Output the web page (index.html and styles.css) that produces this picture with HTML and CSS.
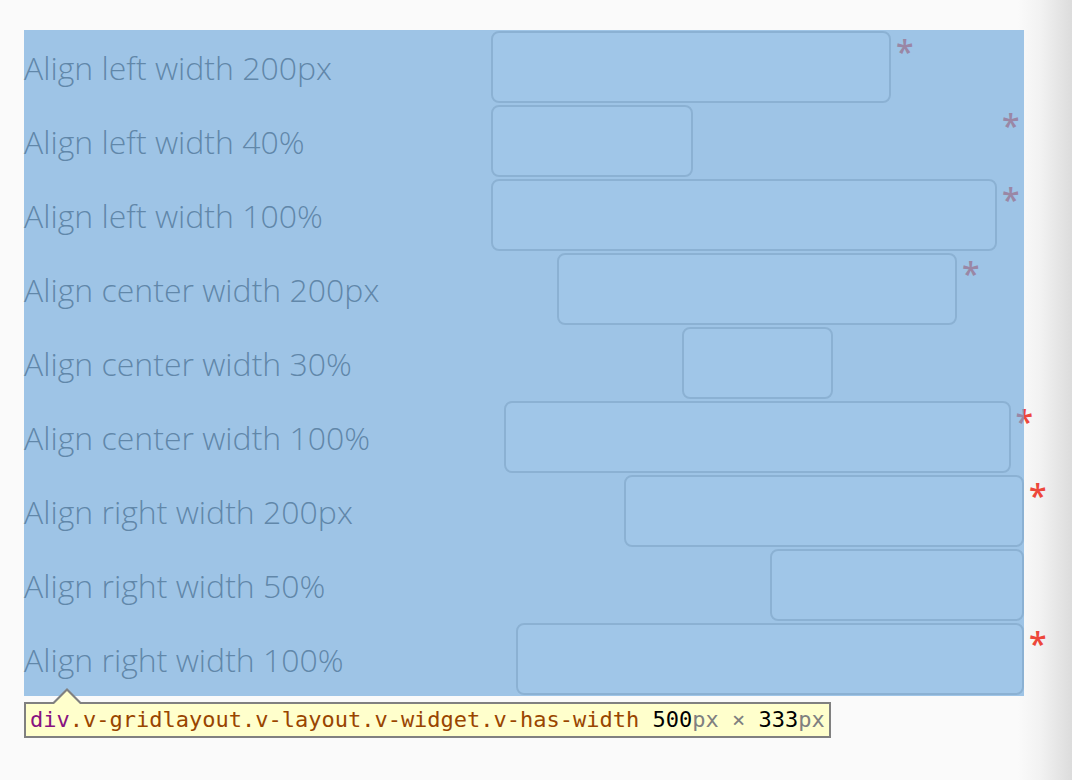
FILE: index.html
```html
<!DOCTYPE html>
<html lang="en">
<head>
  <meta charset="UTF-8">
  <title>GridLayout alignment</title>
  <link rel="stylesheet" href="styles.css">
</head>
<body>
  <div class="page">
    <!-- Grid of captions and text fields -->
    <div class="form">
      <div class="caption">Align left width 200px</div>
      <div class="slot">
        <div class="field w-200"></div><span class="req">*</span>
      </div>

      <div class="caption">Align left width 40%</div>
      <div class="slot">
        <div class="field w-40"></div><span class="req req-end">*</span>
      </div>

      <div class="caption">Align left width 100%</div>
      <div class="slot">
        <div class="field w-100-left"></div><span class="req">*</span>
      </div>

      <div class="caption">Align center width 200px</div>
      <div class="slot center">
        <div class="field w-200"></div><span class="req">*</span>
      </div>

      <div class="caption">Align center width 30%</div>
      <div class="slot center">
        <div class="field w-30"></div>
      </div>

      <div class="caption">Align center width 100%</div>
      <div class="slot center">
        <div class="field w-100-center"></div><span class="req">*</span>
      </div>

      <div class="caption">Align right width 200px</div>
      <div class="slot right">
        <div class="field w-200"></div><span class="req">*</span>
      </div>

      <div class="caption">Align right width 50%</div>
      <div class="slot right">
        <div class="field w-50"></div>
      </div>

      <div class="caption">Align right width 100%</div>
      <div class="slot right">
        <div class="field w-100-right"></div><span class="req">*</span>
      </div>

      <!-- inspector highlight -->
      <div class="highlight"></div>
    </div>

    <div class="inspect-tip">
      <span class="tag">div</span><span class="cls">.v-gridlayout.v-layout.v-widget.v-has-width</span>
      <span class="num">500</span><span class="unit">px</span> <span class="unit">&times;</span> <span class="num">333</span><span class="unit">px</span>
    </div>
  </div>
</body>
</html>
```

FILE: styles.css
```css
* {
  margin: 0;
  padding: 0;
  box-sizing: border-box;
}

body {
  height: 780px;
  background: linear-gradient(90deg, #fafafa 1018px, #f2f2f2 1040px, #dcdcdc 1072px);
  font-family: "Open Sans", Arial, sans-serif;
  overflow: hidden;
}

.page {
  padding: 30px 0 0 24px;
}

/* Grid layout */
.form {
  position: relative;
  width: 1000px;
  display: grid;
  grid-template-columns: 466px 534px;
  grid-auto-rows: 74px;
}

.caption {
  align-self: center;
  font-size: 32px;
  font-weight: 300;
  color: #474747;
  white-space: nowrap;
}

.slot {
  display: flex;
  align-items: center;
}

.slot.left {
  padding-left: 1px;
}

.slot.center {
  justify-content: center;
}

.slot.right {
  justify-content: flex-end;
}

.field {
  height: 72px;
  background: #fff;
  border: 2px solid #c2c2c2;
  border-radius: 8px;
  flex-shrink: 0;
}

.slot:not(.center):not(.right) .field {
  margin-left: 1px;
}

.w-200 { width: 400px; }
.w-40 { width: 202px; }
.w-30 { width: 151px; }
.w-50 { width: 254px; }
.w-100-left { width: 506px; }
.w-100-center { width: 507px; }
.w-100-right { width: 508px; }

/* Required indicator */
.req {
  align-self: flex-start;
  width: 16px;
  margin: 6px -21px 0 5px;
  font-size: 32px;
  font-weight: 600;
  line-height: 32px;
  color: #ed473b;
  flex-shrink: 0;
}

.req-end {
  margin-left: auto;
  margin-right: 6px;
}

/* Inspector overlay */
.highlight {
  position: absolute;
  top: 0;
  left: 0;
  right: 0;
  bottom: 0;
  background: rgba(111, 168, 220, 0.66);
  pointer-events: none;
}

.inspect-tip {
  position: relative;
  display: inline-block;
  margin-top: 6px;
  padding: 0 4px;
  background: #ffffcc;
  border: 2px solid #808080;
  font-family: "DejaVu Sans Mono", "Liberation Mono", monospace;
  font-size: 22px;
  line-height: 32px;
  white-space: nowrap;
}

.inspect-tip::before,
.inspect-tip::after {
  content: "";
  position: absolute;
  width: 0;
  height: 0;
  border-style: solid;
  border-color: transparent;
}

.inspect-tip::before {
  left: 27px;
  bottom: calc(100% + 2px);
  border-width: 0 14px 14px;
  border-bottom-color: #808080;
}

.inspect-tip::after {
  left: 28px;
  bottom: 100%;
  border-width: 0 13px 13px;
  border-bottom-color: #ffffcc;
}

.tag { color: #881280; }
.cls { color: #994500; }
.num { color: #000; }
.unit { color: #808080; }
```
